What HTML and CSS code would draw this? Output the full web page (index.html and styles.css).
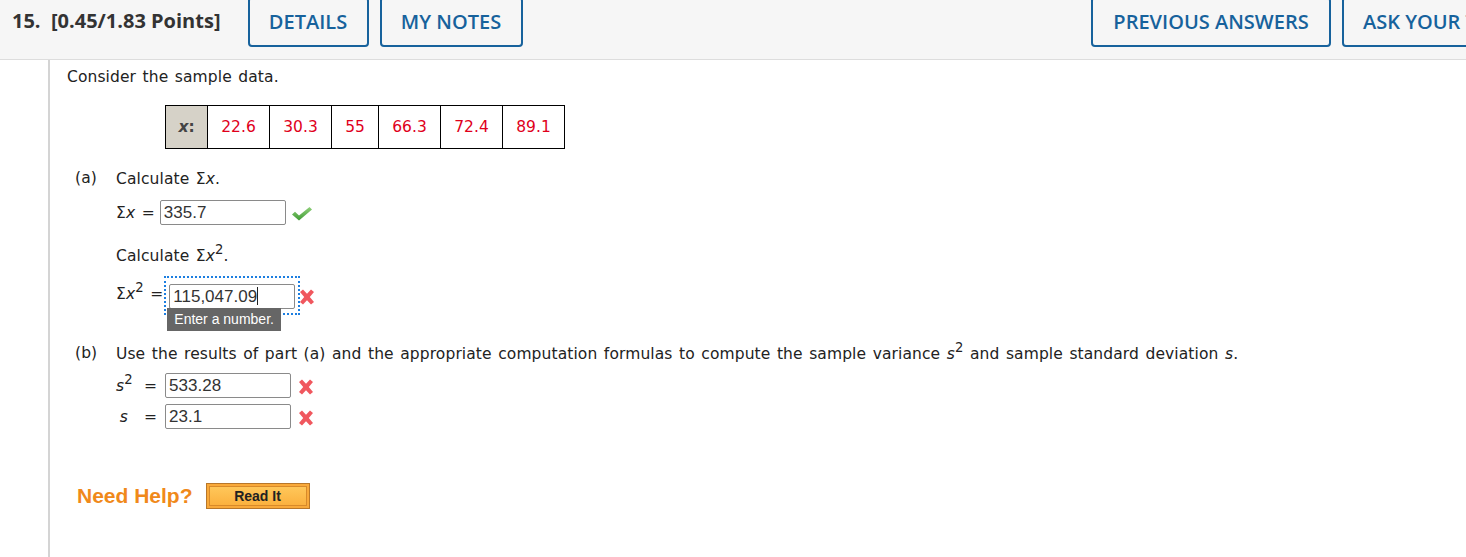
FILE: index.html
```html
<!DOCTYPE html>
<html>
<head>
<meta charset="utf-8">
<link rel="stylesheet" href="styles.css">
</head>
<body>
<div class="header">
  <div class="title">15.&nbsp;&nbsp;[0.45/1.83 Points]</div>
  <div class="btn b-details">DETAILS</div>
  <div class="btn b-notes">MY NOTES</div>
  <div class="spacer"></div>
  <div class="btn b-prev">PREVIOUS ANSWERS</div>
  <div class="btn b-ask">ASK YOUR TEACHER</div>
</div>
<div class="main">
  <p class="intro">Consider the sample data.</p>
  <table class="data">
    <tr>
      <th><i>x</i>:</th>
      <td>22.6</td><td>30.3</td><td>55</td><td>66.3</td><td>72.4</td><td>89.1</td>
    </tr>
  </table>

  <div class="part part-a">
    <div class="plabel">(a)</div>
    <div class="pbody">
      <div class="q">Calculate Σ<i>x</i>.</div>
      <div class="row r1">
        <span class="lbl">Σ<i>x</i> =</span>
        <span class="field">335.7</span>
        <svg class="icon check" width="22" height="16" viewBox="0 0 22 16">
          <defs><linearGradient id="g" x1="0" y1="0" x2="0" y2="1"><stop offset="0" stop-color="#8fd07a"/><stop offset="1" stop-color="#3f9b34"/></linearGradient></defs>
          <path d="M1 8.5 L4 5.8 L8 9.5 L18.5 1 L21 3.5 L8 14.5 Z" fill="url(#g)"/>
        </svg>
      </div>
      <div class="q q2">Calculate Σ<i>x</i><sup>2</sup>.</div>
      <div class="row r2">
        <span class="lbl">Σ<i>x</i><sup>2</sup> =</span>
        <span class="focus">
          <span class="field wide">115,047.09<span class="caret"></span></span>
          <span class="tip">Enter a number.</span>
        </span>
        <svg class="icon cross xfocus" width="18" height="16" viewBox="0 0 18 16">
          <path d="M2 3 L5 0.5 L9 4.8 L13 0.5 L16 3 L11.8 8 L16 13 L13 15.5 L9 11.2 L5 15.5 L2 13 L6.2 8 Z" fill="#f0575e"/>
        </svg>
      </div>
    </div>
  </div>

  <div class="part part-b">
    <div class="plabel">(b)</div>
    <div class="pbody">
      <div class="q">Use the results of part (a) and the appropriate computation formulas to compute the sample variance <i>s</i><sup>2</sup> and sample standard deviation <i>s</i>.</div>
      <div class="row r3">
        <span class="lbl2"><i>s</i><sup>2</sup></span><span class="eq">=</span>
        <span class="field">533.28</span>
        <svg class="icon cross" width="18" height="16" viewBox="0 0 18 16">
          <path d="M2 3 L5 0.5 L9 4.8 L13 0.5 L16 3 L11.8 8 L16 13 L13 15.5 L9 11.2 L5 15.5 L2 13 L6.2 8 Z" fill="#f0575e"/>
        </svg>
      </div>
      <div class="row r4">
        <span class="lbl2 right"><i>s</i></span><span class="eq">=</span>
        <span class="field">23.1</span>
        <svg class="icon cross" width="18" height="16" viewBox="0 0 18 16">
          <path d="M2 3 L5 0.5 L9 4.8 L13 0.5 L16 3 L11.8 8 L16 13 L13 15.5 L9 11.2 L5 15.5 L2 13 L6.2 8 Z" fill="#f0575e"/>
        </svg>
      </div>
    </div>
  </div>

  <div class="help">
    <span class="need">Need Help?</span>
    <span class="readit"><span>Read It</span></span>
  </div>
</div>
</body>
</html>
```
FILE: styles.css
```css
html, body { margin: 0; padding: 0; background: #fff; }
body { font-family: "DejaVu Sans", Verdana, sans-serif; color: #222; overflow: hidden; width: 1466px; height: 557px; }

.header {
  display: flex;
  align-items: flex-start;
  height: 59px;
  background: #f6f6f6;
  border-bottom: 1px solid #dddddd;
  overflow: hidden;
  white-space: nowrap;
}
.title {
  font-family: "Open Sans", sans-serif;
  font-weight: 700;
  font-size: 20px;
  color: #333;
  margin: 7px 27px 0 12px;
}
.btn {
  box-sizing: border-box;
  margin-top: -3px;
  height: 50px;
  border: 2px solid #17629c;
  border-radius: 4px;
  color: #17629c;
  font-family: "Open Sans", sans-serif;
  font-weight: 600;
  font-size: 20px;
  display: flex;
  align-items: center;
  justify-content: center;
  padding-bottom: 2px;
  flex-shrink: 0;
}
.b-details { width: 121px; }
.b-notes { width: 143px; margin-left: 11px; }
.spacer { flex: 1; }
.b-prev { width: 240px; margin-right: 11px; }
.b-ask { width: 220px; justify-content: flex-start; padding-left: 19px; margin-right: -96px; }

.main {
  margin-left: 48px;
  border-left: 2px solid #d4d4d4;
  padding-left: 17px;
  padding-top: 7px;
  height: 490px;
  font-size: 15.5px;
  word-spacing: 1.5px;
  letter-spacing: 0.1px;
}
.intro { margin: 0; line-height: 20px; }

.data {
  border-collapse: collapse;
  margin: 18px 0 0 98px;
  letter-spacing: 0;
  word-spacing: 0;
}
.data th, .data td {
  border: 1px solid #000;
  height: 42px;
  padding: 0;
  font-weight: normal;
  color: #e0001b;
  text-align: center;
  font-size: 15.5px;
}
.data th { background: #d6d2c8; color: #444; font-weight: bold; width: 41px; }
.data td { width: 61px; }
.data td:nth-of-type(3) { width: 46px; }

.part { display: flex; }
.plabel { width: 41px; margin-left: 8px; }
.part-a { margin-top: 20px; }
.q { line-height: 20px; }
.row { display: flex; align-items: center; }
.lbl { white-space: nowrap; }
.field {
  box-sizing: border-box;
  display: inline-block;
  width: 126px;
  height: 25px;
  border: 1px solid #8a8a8a;
  border-radius: 2px;
  font-family: "Liberation Sans", Arial, sans-serif;
  font-size: 17px;
  letter-spacing: 0;
  word-spacing: 0;
  line-height: 23px;
  padding-left: 3px;
  color: #333;
}
.r1 { margin-top: 11px; }
.r1 .field { margin-left: 5px; }
.icon.check { margin-left: 5px; margin-top: 2px; }
.q2 { margin-top: 21px; }
.r2 { margin-top: 10px; align-items: flex-start; }
.r2 .lbl { margin-top: 9px; }
.focus {
  position: relative;
  display: inline-block;
  margin-left: 1px;
  width: 136px;
  height: 39px;
  box-sizing: border-box;
  border: 2px dotted #1c7ee0;
  margin-top: 0;
}
.focus .field { margin: 6px 0 0 3px; width: 126px; height: 25px; }
.caret { display: inline-block; width: 1px; height: 18px; background: #222; vertical-align: -3px; }
.tip {
  position: absolute;
  left: 1px;
  top: 30px;
  background: #666;
  color: #fff;
  font-family: "Liberation Sans", Arial, sans-serif;
  font-size: 14px;
  letter-spacing: 0;
  word-spacing: 0;
  padding: 3px 7px;
  line-height: 17px;
  white-space: nowrap;
}

.part-b { margin-top: 29px; }
.r3 { margin-top: 9px; }
.r4 { margin-top: 6px; }
.lbl2 { display: inline-block; width: 22px; }
.r4 .lbl2 { width: 12px; text-align: right; }
.r4 .eq { margin-left: 16px; }
.eq { margin: 0 8px 0 6px; }
.row .icon.cross { margin-left: 6px; margin-top: 2px; }
.row .icon.cross.xfocus { margin-left: -2px; margin-top: 13px; }

sup { font-size: 0.85em; line-height: 0; vertical-align: 0.55em; }

.help {
  display: flex;
  align-items: center;
  margin-top: 54px;
  margin-left: 10px;
}
.need {
  font-family: "Liberation Sans", Arial, sans-serif;
  font-weight: bold;
  font-size: 21px;
  letter-spacing: 0;
  word-spacing: 0;
  color: #f0891a;
}
.readit {
  margin-left: 13px;
  box-sizing: border-box;
  width: 104px;
  height: 26px;
  border: 1px solid #b8772a;
  background: #f9a93a;
  padding: 2px;
  display: flex;
}
.readit span {
  flex: 1;
  border: 1px solid #d88a2a;
  background: linear-gradient(#ffc75a, #fbb13f);
  font-family: "Liberation Sans", Arial, sans-serif;
  font-weight: bold;
  font-size: 14px;
  letter-spacing: 0;
  word-spacing: 0;
  color: #222;
  text-align: center;
  line-height: 18px;
}
```
